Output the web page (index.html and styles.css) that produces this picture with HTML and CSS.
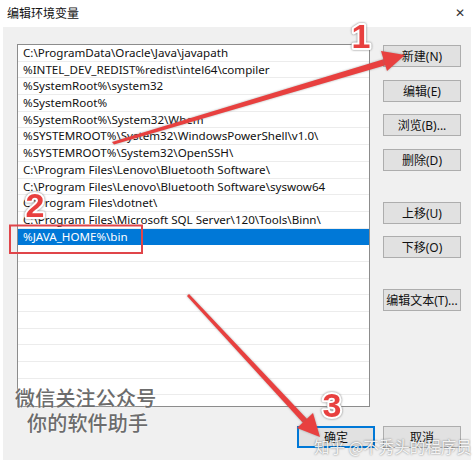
FILE: index.html
```html
<!DOCTYPE html>
<html lang="zh-CN">
<head>
  <meta charset="UTF-8">
  <meta name="viewport" content="width=device-width, initial-scale=1.0">
  <title>编辑环境变量</title>
  <link rel="stylesheet" href="styles.css">
</head>
<body>
  <div class="window">
    <!-- Barre de titre -->
    <header class="title-bar">
      <span class="title">编辑环境变量</span>
      <span class="close">✕</span>
    </header>

    <!-- Corps du dialogue -->
    <div class="dialog-body">
      <div class="main-row">
        <ul class="path-list">
          <li>C:\ProgramData\Oracle\Java\javapath</li>
          <li>%INTEL_DEV_REDIST%redist\intel64\compiler</li>
          <li>%SystemRoot%\system32</li>
          <li>%SystemRoot%</li>
          <li>%SystemRoot%\System32\Wbem</li>
          <li>%SYSTEMROOT%\System32\WindowsPowerShell\v1.0\</li>
          <li>%SYSTEMROOT%\System32\OpenSSH\</li>
          <li>C:\Program Files\Lenovo\Bluetooth Software\</li>
          <li>C:\Program Files\Lenovo\Bluetooth Software\syswow64</li>
          <li>C:\Program Files\dotnet\</li>
          <li>C:\Program Files\Microsoft SQL Server\120\Tools\Binn\</li>
          <li class="selected">%JAVA_HOME%\bin</li>
          <li></li><li></li><li></li><li></li><li></li>
          <li></li><li></li><li></li><li></li><li></li>
        </ul>

        <div class="side-buttons">
          <button class="btn">新建(N)</button>
          <button class="btn">编辑(E)</button>
          <button class="btn">浏览(B)...</button>
          <button class="btn">删除(D)</button>
          <button class="btn group-start">上移(U)</button>
          <button class="btn">下移(O)</button>
          <button class="btn group-start">编辑文本(T)...</button>
        </div>
      </div>

      <footer class="bottom-row">
        <button class="btn btn-default">确定</button>
        <button class="btn">取消</button>
      </footer>
    </div>
  </div>

  <!-- Annotations -->
  <div class="watermark-left">
    <div>微信关注公众号</div>
    <div class="line2">你的软件助手</div>
  </div>
  <div class="watermark-zhihu">知乎 @不秀头的程序员</div>

  <svg class="overlay" width="474" height="464" viewBox="0 0 474 464">
    <rect class="mark-box" x="10" y="225.5" width="132" height="27.5"/>

    <polygon class="arrow-shaft" points="112,142 386,58.5 388,64.5 114,144.5"/>
    <polygon class="arrow-head" points="405,55 387,71 381,51"/>

    <polygon class="arrow-shaft" points="187,296 189,294 308,420 304,424"/>
    <polygon class="arrow-head" points="320,437 297,428 313,413"/>

    <text class="step" x="361" y="48">1</text>
    <text class="step" x="35" y="217">2</text>
    <text class="step" x="332" y="417">3</text>
  </svg>
</body>
</html>
```

FILE: styles.css
```css
/* Styles globaux */
body, html {
  margin: 0;
  padding: 0;
  width: 474px;
  height: 464px;
  overflow: hidden;
  background-color: #ffffff;
  font-family: "Noto Sans", "Noto Sans CJK SC", sans-serif;
}

.window {
  display: flex;
  flex-direction: column;
  width: 474px;
  height: 464px;
}

/* Barre de titre */
.title-bar {
  height: 27px;
  display: flex;
  justify-content: space-between;
  align-items: center;
  padding: 0 9px 2px 7px;
  box-sizing: border-box;
}

.title {
  font-size: 12px;
  color: #111;
}

.close {
  font-size: 12px;
  color: #333;
}

/* Corps */
.dialog-body {
  margin: 0 3px;
  height: 433px;
  background-color: #f0f0f0;
  padding: 17px 10px 0 14px;
  box-sizing: border-box;
  display: flex;
  flex-direction: column;
}

.main-row {
  display: flex;
  gap: 13px;
}

.path-list {
  list-style: none;
  margin: 0;
  padding: 0;
  width: 353px;
  height: 363px;
  box-sizing: border-box;
  border: 1px solid #8c8c8c;
  background-color: #fff;
  overflow: hidden;
}

.path-list li {
  height: 16.7px;
  line-height: 16px;
  box-sizing: border-box;
  padding-left: 5px;
  border-bottom: 1px solid #ececec;
  font-size: 11.6px;
  color: #111;
  white-space: nowrap;
}

.path-list li.selected {
  background-color: #0078d7;
  color: #fff;
  border-bottom-color: #0078d7;
}

/* Boutons */
.side-buttons {
  display: flex;
  flex-direction: column;
  gap: 12.7px;
  padding-top: 1px;
}

.btn {
  width: 78px;
  height: 22px;
  padding: 0;
  background-color: #e1e1e1;
  border: 1px solid #adadad;
  font-family: "Noto Sans", "Noto Sans CJK SC", sans-serif;
  font-size: 12px;
  color: #111;
}

.group-start {
  margin-top: 18px;
}

.btn-default {
  border: 2px solid #0078d7;
}

.bottom-row {
  display: flex;
  justify-content: flex-end;
  gap: 8px;
  margin-top: 19px;
}

/* Filigranes */
.watermark-left {
  position: absolute;
  left: 15px;
  top: 385px;
  font-family: "Noto Sans CJK SC", sans-serif;
  font-weight: 500;
  font-size: 20px;
  line-height: 25px;
  color: #6c6c6c;
  text-shadow: 0 0 2px #fff;
  letter-spacing: 0.2px;
}

.watermark-left .line2 {
  padding-left: 12px;
}

.watermark-zhihu {
  position: absolute;
  left: 314px;
  top: 437px;
  font-family: "Noto Sans CJK SC", sans-serif;
  font-size: 15.5px;
  line-height: 18px;
  color: rgba(255, 255, 255, 0.9);
  text-shadow: 0 0 2px rgba(0, 0, 0, 0.55);
}

/* Annotations rouges */
.overlay {
  position: absolute;
  left: 0;
  top: 0;
  pointer-events: none;
}

.mark-box {
  fill: none;
  stroke: #e0454a;
  stroke-width: 2;
}

.arrow-shaft,
.arrow-head {
  fill: #e8403f;
  filter: drop-shadow(0 0 1px rgba(120, 120, 120, 0.6));
}

.step {
  font-family: "Liberation Sans", sans-serif;
  font-weight: bold;
  font-size: 34px;
  text-anchor: middle;
  fill: #e8403f;
  stroke: #fff;
  stroke-width: 4px;
  paint-order: stroke;
  stroke-linejoin: round;
  filter: drop-shadow(0 0 1px rgba(90, 90, 90, 0.8));
}
```
